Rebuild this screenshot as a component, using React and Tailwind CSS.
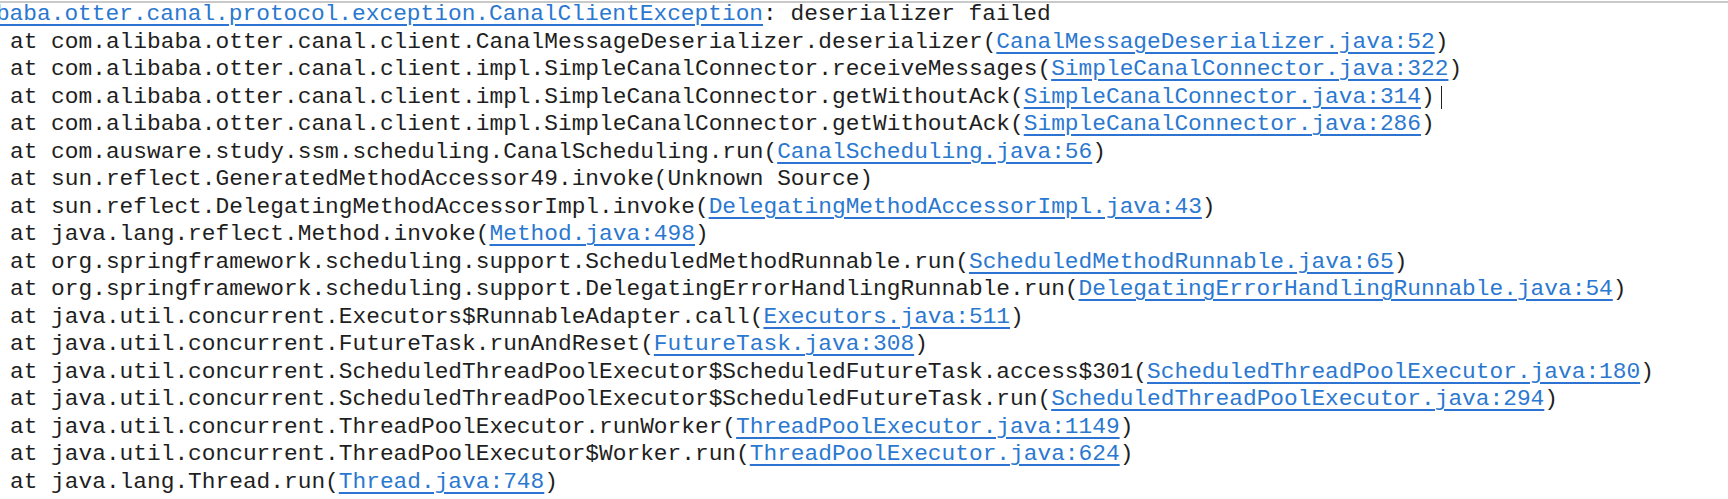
import React from "react";

const frames = [
  ["com.alibaba.otter.canal.client.CanalMessageDeserializer.deserializer", "CanalMessageDeserializer.java:52"],
  ["com.alibaba.otter.canal.client.impl.SimpleCanalConnector.receiveMessages", "SimpleCanalConnector.java:322"],
  ["com.alibaba.otter.canal.client.impl.SimpleCanalConnector.getWithoutAck", "SimpleCanalConnector.java:314", true],
  ["com.alibaba.otter.canal.client.impl.SimpleCanalConnector.getWithoutAck", "SimpleCanalConnector.java:286"],
  ["com.ausware.study.ssm.scheduling.CanalScheduling.run", "CanalScheduling.java:56"],
  ["sun.reflect.GeneratedMethodAccessor49.invoke", null, false, "Unknown Source"],
  ["sun.reflect.DelegatingMethodAccessorImpl.invoke", "DelegatingMethodAccessorImpl.java:43"],
  ["java.lang.reflect.Method.invoke", "Method.java:498"],
  ["org.springframework.scheduling.support.ScheduledMethodRunnable.run", "ScheduledMethodRunnable.java:65"],
  ["org.springframework.scheduling.support.DelegatingErrorHandlingRunnable.run", "DelegatingErrorHandlingRunnable.java:54"],
  ["java.util.concurrent.Executors$RunnableAdapter.call", "Executors.java:511"],
  ["java.util.concurrent.FutureTask.runAndReset", "FutureTask.java:308"],
  ["java.util.concurrent.ScheduledThreadPoolExecutor$ScheduledFutureTask.access$301", "ScheduledThreadPoolExecutor.java:180"],
  ["java.util.concurrent.ScheduledThreadPoolExecutor$ScheduledFutureTask.run", "ScheduledThreadPoolExecutor.java:294"],
  ["java.util.concurrent.ThreadPoolExecutor.runWorker", "ThreadPoolExecutor.java:1149"],
  ["java.util.concurrent.ThreadPoolExecutor$Worker.run", "ThreadPoolExecutor.java:624"],
  ["java.lang.Thread.run", "Thread.java:748"],
];

function Link({ children }) {
  return (
    <span className="text-[#2b78d0] underline decoration-[#2d74d2] decoration-2 underline-offset-[4px]">
      {children}
    </span>
  );
}

export default function App() {
  return (
    <div
      className="w-[1728px] h-[499px] overflow-hidden bg-white pt-px text-[#1e1e1e] text-[22.83px] leading-[27.5px] whitespace-pre"
      style={{ fontFamily: '"Liberation Mono", "Courier New", monospace' }}
    >
      <div className="h-[2px] bg-[#c9c9c9]" />
      <div className="-mt-[2px] pl-[10px]">
        <div className="-ml-[110px]">
          <Link>com.alibaba.otter.canal.protocol.exception.CanalClientException</Link>
          <span>: deserializer failed</span>
        </div>
        {frames.map(([method, loc, cursor, plain], i) => (
          <div key={i} className="flex items-center">
            <span>
              {"at " + method + "("}
              {loc ? <Link>{loc}</Link> : plain}
              {")"}
            </span>
            {cursor && <span className="ml-[6px] w-[1.5px] h-[23px] bg-[#222]" />}
          </div>
        ))}
      </div>
    </div>
  );
}
